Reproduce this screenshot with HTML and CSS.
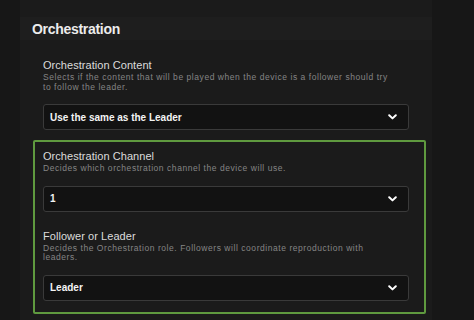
FILE: index.html
```html
<!DOCTYPE html>
<html>
<head>
<meta charset="utf-8">
<link rel="stylesheet" href="styles.css">
</head>
<body>
<div class="panel">
  <div class="header">Orchestration</div>
  <div class="field first">
    <div class="label">Orchestration Content</div>
    <div class="desc">Selects if the content that will be played when the device is a follower should try to follow the leader.</div>
    <div class="select"><span>Use the same as the Leader</span>
      <svg class="chev" viewBox="0 0 9 6" width="9" height="6"><path d="M1.2 1.2 L4.5 4.4 L7.8 1.2" fill="none" stroke="#fff" stroke-width="2" stroke-linecap="round" stroke-linejoin="round"/></svg>
    </div>
  </div>
  <div class="group">
    <div class="field">
      <div class="label">Orchestration Channel</div>
      <div class="desc">Decides which orchestration channel the device will use.</div>
      <div class="select"><span>1</span>
        <svg class="chev" viewBox="0 0 9 6" width="9" height="6"><path d="M1.2 1.2 L4.5 4.4 L7.8 1.2" fill="none" stroke="#fff" stroke-width="2" stroke-linecap="round" stroke-linejoin="round"/></svg>
      </div>
    </div>
    <div class="field">
      <div class="label">Follower or Leader</div>
      <div class="desc">Decides the Orchestration role. Followers will coordinate reproduction with leaders.</div>
      <div class="select"><span>Leader</span>
        <svg class="chev" viewBox="0 0 9 6" width="9" height="6"><path d="M1.2 1.2 L4.5 4.4 L7.8 1.2" fill="none" stroke="#fff" stroke-width="2" stroke-linecap="round" stroke-linejoin="round"/></svg>
      </div>
    </div>
  </div>
</div>
</body>
</html>
```
FILE: styles.css
```css
html, body {
  margin: 0;
  padding: 0;
  background: #171717;
  height: 100%;
  overflow: hidden;
}
body {
  font-family: "Liberation Sans", Arial, sans-serif;
  color: #e6e6e6;
}
.panel {
  margin-left: 20px;
  width: 412px;
  min-height: 320px;
  background: #1b1b1b;
  padding-top: 17px;
  box-sizing: border-box;
}
.header {
  height: 23px;
  box-sizing: border-box;
  padding-top: 2px;
  line-height: 21px;
  background: #1e1e1e;
  padding-left: 12px;
  font-size: 14px;
  font-weight: bold;
  letter-spacing: -0.3px;
  color: #ececec;
}
.field {
  width: 366px;
}
.field.first {
  margin-left: 23px;
  padding-top: 19px;
}
.label {
  font-size: 11px;
  line-height: 13px;
  letter-spacing: 0.05px;
  color: #dcdcdc;
}
.desc {
  margin-top: 1px;
  font-size: 8.5px;
  line-height: 9.5px;
  letter-spacing: 0.55px;
  color: #858585;
  max-width: 350px;
}
.select {
  margin-top: 12px;
  height: 26px;
  box-sizing: border-box;
  border: 1px solid #3a3a3a;
  border-radius: 3px;
  background: #121212;
  display: flex;
  align-items: center;
  justify-content: space-between;
  padding: 0 11px 0 6px;
  font-size: 10px;
  font-weight: bold;
  letter-spacing: 0;
  color: #f4f4f4;
}
.chev {
  display: block;
}
.group {
  margin-top: 10px;
  margin-left: 13px;
  width: 393px;
  box-sizing: border-box;
  border: 2px solid #5f9a3f;
  border-radius: 2px;
  padding: 8px 15px 11px 8px;
  display: flex;
  flex-direction: column;
  gap: 18px;
}
```
